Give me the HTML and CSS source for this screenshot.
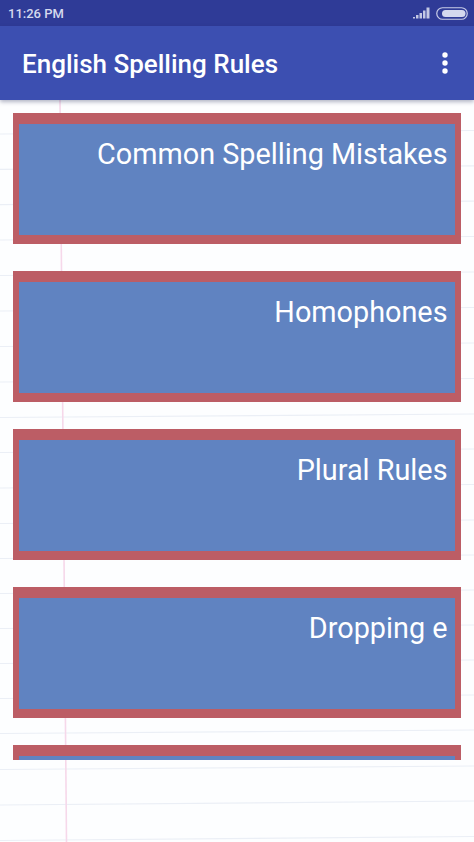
FILE: index.html
```html
<!DOCTYPE html>
<html lang="en">
<head>
<meta charset="utf-8">
<title>English Spelling Rules</title>
<link rel="stylesheet" href="styles.css">
</head>
<body>
<div class="screen">
  <svg class="paper" width="474" height="842" viewBox="0 0 474 842" aria-hidden="true">
    <g class="rules">
      <path d="M0 134L474 130.500"/><path d="M0 169.300L474 165.800"/><path d="M0 204.600L474 201.100"/><path d="M0 240L474 236.500"/>
      <path d="M0 275.500L474 272"/><path d="M0 311L474 307.500"/><path d="M0 346.500L474 343"/><path d="M0 382L474 378.500"/>
      <path d="M0 417.500L474 414"/><path d="M0 452.500L474 449"/><path d="M0 488L474 484.500"/><path d="M0 523.500L474 520"/>
      <path d="M0 558.500L474 555"/><path d="M0 593.500L474 590"/><path d="M0 628.500L474 625"/><path d="M0 663.500L474 660"/>
      <path d="M0 698.500L474 695"/><path d="M0 733.500L474 730"/><path d="M0 769.500L474 766"/><path d="M0 805L474 801"/><path d="M0 840.500L474 836.500"/>
    </g>
    <path class="margin" d="M60 100L66.500 842"/>
  </svg>
  <div class="status">
    <span class="time">11:26 PM</span>
    <div class="indicators">
      <svg class="signal" width="17" height="12" viewBox="0 0 17 12" aria-hidden="true">
        <path d="M0 11.500h2v-1.500h-2zM3 11.500h2.500v-3.500h-2.500zM6.500 11.500h2.500v-5.500h-2.500zM10 11.500h2.500v-8h-2.500zM13.500 11.500h3v-11h-3z"/>
      </svg>
      <svg class="battery" width="32" height="13" viewBox="0 0 32 13" aria-hidden="true">
        <rect class="battery-case" x="0.750" y="0.750" width="30.500" height="11.500" rx="5.750"/>
        <rect class="battery-level" x="6" y="3" width="23.500" height="7" rx="3.500"/>
      </svg>
    </div>
  </div>
  <header class="appbar">
    <h1 class="title">English Spelling Rules</h1>
    <svg class="more" width="6" height="22" viewBox="0 0 6 22" aria-hidden="true">
      <circle cx="3" cy="3" r="2.700"/><circle cx="3" cy="11" r="2.700"/><circle cx="3" cy="19" r="2.700"/>
    </svg>
  </header>
  <main class="list">
    <div class="card">Common Spelling Mistakes</div>
    <div class="card">Homophones</div>
    <div class="card">Plural Rules</div>
    <div class="card">Dropping e</div>
    <div class="card"></div>
  </main>
</div>
</body>
</html>
```
FILE: styles.css
```css
* { box-sizing: border-box; }
html, body { margin: 0; padding: 0; }
body { width: 474px; height: 842px; overflow: hidden; font-family: Roboto, "Noto Sans", sans-serif; }
.screen { position: relative; width: 474px; height: 842px; background: #fdfeff; overflow: hidden; display: flex; flex-direction: column; }
.paper { position: absolute; left: 0; top: 0; }
.rules path { stroke: #ebeff6; stroke-width: 1.2; fill: none; }
.margin { stroke: #f6d8ea; stroke-width: 1.6; fill: none; }
.status { position: relative; height: 26px; flex: none; background: #2f3b97; display: flex; align-items: center; justify-content: space-between; padding: 0 6px 0 8px; }
.time { color: #d5d9ee; font-size: 13px; font-weight: 500; }
.indicators { display: flex; align-items: center; gap: 6px; }
.signal path { fill: #c3c8e4; }
.battery-case { fill: none; stroke: #c9cde8; stroke-width: 1.200; }
.battery-level { fill: #d4d8ee; }
.appbar { position: relative; z-index: 1; height: 74px; flex: none; background: #3c4fb1; box-shadow: 0 2px 4px rgba(40, 45, 90, 0.35); display: flex; align-items: center; justify-content: space-between; padding: 2px 26px 0 22px; }
.title { margin: 0; color: #fff; font-size: 26px; font-weight: 500; }
.more { fill: #fff; margin-top: -2px; }
.list { position: relative; height: 660px; flex: none; overflow: hidden; padding: 13px 13px 0; display: flex; flex-direction: column; gap: 27px; }
.card { flex: none; height: 131px; background: #6083c1; border-style: solid; border-color: #bc5d65; border-width: 11px 6px 9px; padding: 12px 7.500px 0 0; color: #fff; text-align: right; font-size: 28.800px; line-height: 36px; }
```
